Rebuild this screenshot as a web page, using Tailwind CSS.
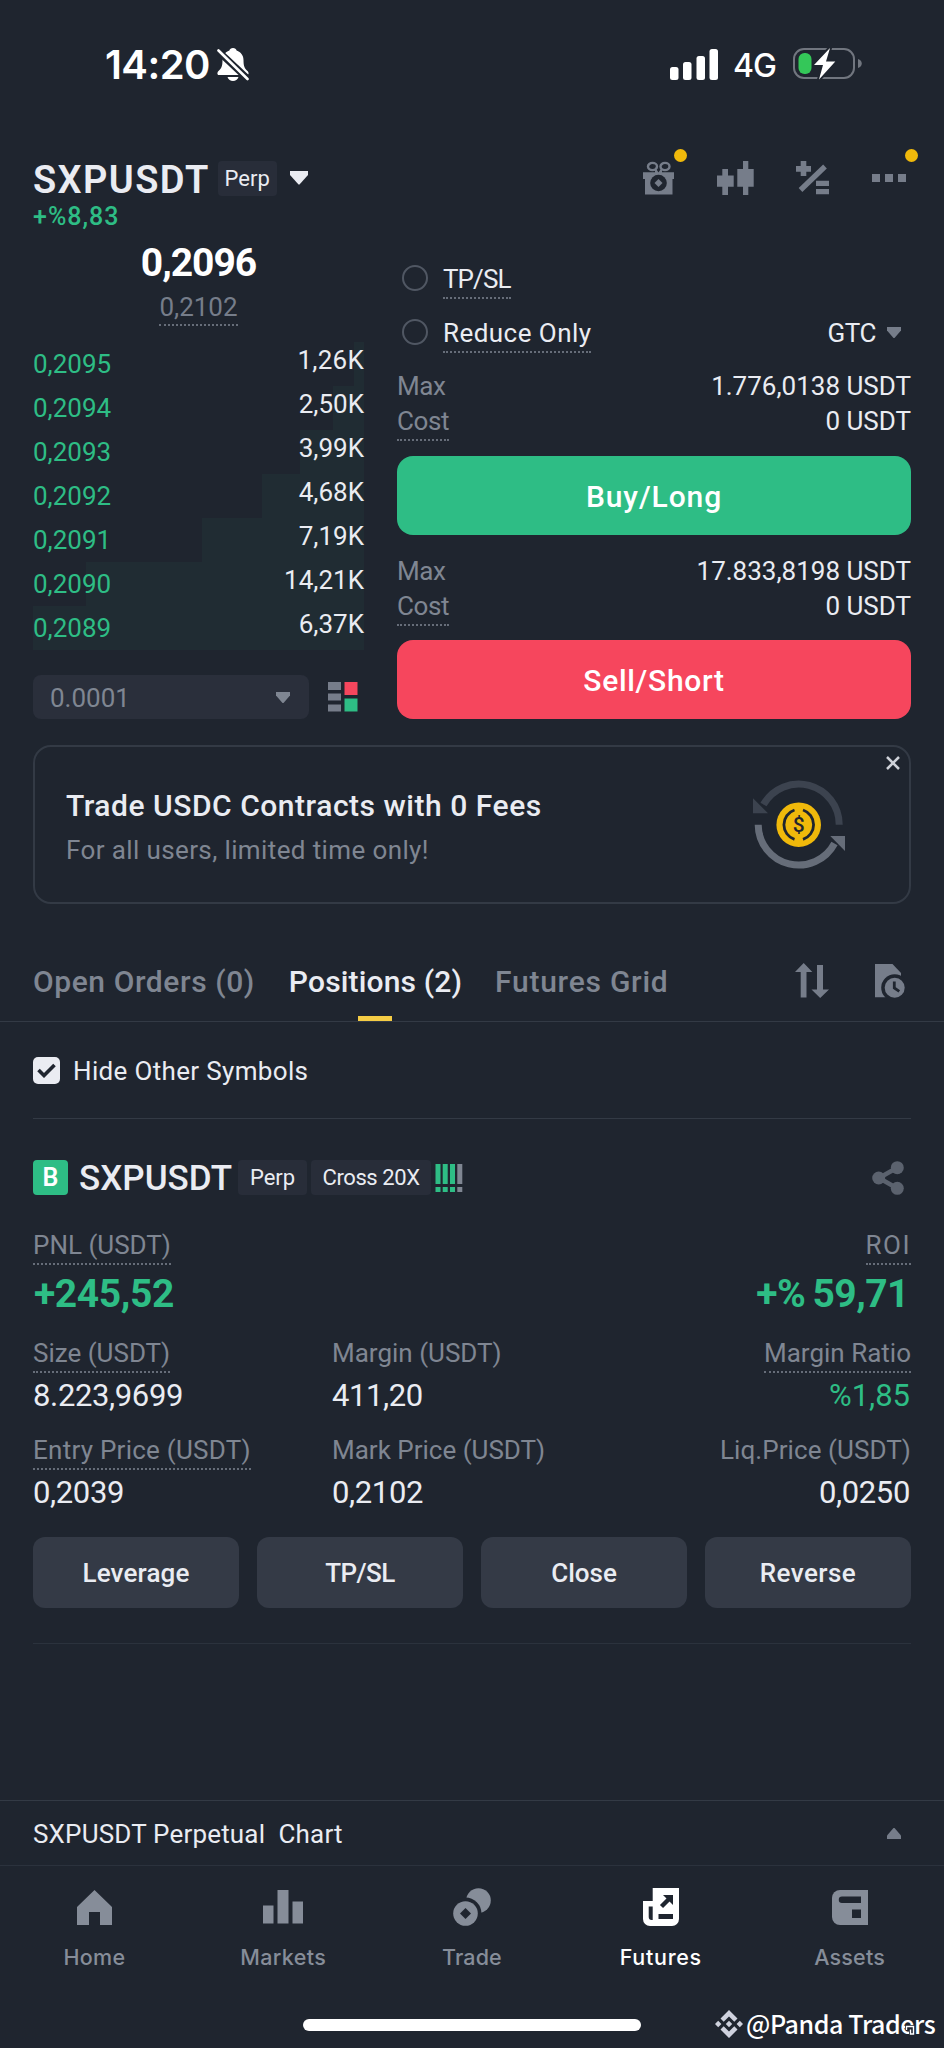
<!DOCTYPE html>
<html lang="en">

<head>
	<meta charset="UTF-8" />
	<meta name="viewport" content="width=device-width, initial-scale=1.0" />
	<title>Futures</title>
	<script src="https://cdn.jsdelivr.net/npm/@tailwindcss/browser@4"></script>
</head>

<body class="bg-[#1f252f]">
<div class="relative w-[944px] h-[2048px] overflow-hidden bg-[#1f252f] text-[#eaecf2] font-[Roboto,sans-serif] text-[26px] whitespace-nowrap">

	<!-- Status bar -->
	<div class="h-[129px] pl-[105px] pr-[83px] flex items-center justify-between text-white font-[Inter,sans-serif]">
		<div class="flex items-center">
			<span class="text-[40px] font-semibold tracking-[-0.56px]">14:20</span>
			<svg class="ml-[7px]" width="32" height="34" viewBox="0 0 32 34" fill="#fff">
				<path d="M16 0c-2 0-3.200 1-3.600 2.500C8 4 5.500 7.500 5.500 12c0 6-1 8.500-4 11-1.500 1.500-1.500 4 .5 4h28c2 0 2-2.500.5-4-3-2.500-4-5-4-11 0-4.500-2.500-8-6.900-9.500C19.200 1 18 0 16 0zM10.500 29h11c-.8 2.600-3 4-5.500 4s-4.700-1.400-5.500-4z" />
				<path d="M1 3l31 29" stroke="#1f252f" stroke-width="7" />
				<path d="M1.500 2.500l29 28.500" stroke="#fff" stroke-width="2.600" stroke-linecap="round" />
			</svg>
		</div>
		<div class="flex items-center">
			<svg width="48" height="31" viewBox="0 0 48 31" fill="#fff">
				<rect x="0" y="18" width="8.500" height="13" rx="2.500" />
				<rect x="13" y="13" width="8.500" height="18" rx="2.500" />
				<rect x="26.500" y="7" width="8.500" height="24" rx="2.500" />
				<rect x="39.500" y="0" width="8.500" height="31" rx="2.500" />
			</svg>
			<span class="ml-[15px] mt-[2px] text-[32px] font-medium tracking-[-1px]">4G</span>
			<svg class="ml-[17px] -mr-px" width="69" height="34" viewBox="0 0 69 34">
				<rect x="1" y="1" width="60" height="29" rx="10" fill="none" stroke="#71767f" stroke-width="2" />
				<path d="M65 11c5 1.500 5 7.500 0 9z" fill="#71767f" />
				<rect x="5.500" y="5" width="13" height="21" rx="6" fill="#34c759" />
				<path d="M37 0L21 17h9l-4 14.500L42.300 13.500H33z" fill="#fff" stroke="#1f252f" stroke-width="4" paint-order="stroke" stroke-linejoin="round" />
			</svg>
		</div>
	</div>

	<!-- Symbol header -->
	<div class="mt-[26px] h-[46px] pl-[33px] pr-[38px] flex items-center justify-between">
		<div class="flex items-center">
			<span class="mt-[4px] text-[38px] font-semibold tracking-[1.4px]">SXPUSDT</span>
			<span class="ml-[8px] h-[35px] w-[59px] flex items-center justify-center rounded-[4px] bg-[#282d39] text-[22px]">Perp</span>
			<svg class="ml-[13px]" width="18" height="14" viewBox="0 0 18 14" fill="#eaecf2"><path d="M0 0h18v4L9.500 13.500h-1L0 4z" /></svg>
		</div>
		<div class="flex items-center text-[#767d8a]">
			<div class="relative">
				<svg width="31" height="34" viewBox="0 0 31 34" fill="currentColor">
					<ellipse cx="9.500" cy="5.500" rx="4.500" ry="3.600" fill="none" stroke="currentColor" stroke-width="2.400" />
					<ellipse cx="22" cy="5.500" rx="4.500" ry="3.600" fill="none" stroke="currentColor" stroke-width="2.400" />
					<path d="M12 6l3.500 5.500L19 6v6h-7zM0 11.300h31V18h-1.500v15.500H2V18H0z" />
					<circle cx="15.500" cy="22" r="8.300" fill="#1f252f" />
					<path d="M15.500 18l4 4-4 4-4-4z" />
				</svg>
				<span class="absolute left-[31px] -top-[12px] w-[13px] h-[13px] rounded-full bg-[#f0b90b]"></span>
			</div>
			<svg class="ml-[43px]" width="37" height="34" viewBox="0 0 37 34" fill="currentColor">
				<path d="M5.300 8H11v6.500h5.700v11.200H11V34H5.300v-8.300H0V14.500h5.300zM26 0h5.300v8h5.400v17.700h-5.400V34H26v-8.300h-5.700V8H26z" />
			</svg>
			<svg class="ml-[42px]" width="33" height="34" viewBox="0 0 33 34" fill="currentColor">
				<path d="M4.700 0h5.600v5H15v5.700h-4.700V15H4.700v-4.300H0V5h4.700zM20 19.700h13V25H20zM20 28h13v5.300H20z" />
				<path d="M4.500 29L29 5.500" stroke="currentColor" stroke-width="5.300" />
			</svg>
			<div class="relative ml-[43px]">
				<svg width="34" height="34" viewBox="0 0 34 34" fill="currentColor"><path d="M0 13h8v8H0zM13 13h8v8h-8zM26 13h8v8h-8z" /></svg>
				<span class="absolute left-[33px] -top-[12px] w-[13px] h-[13px] rounded-full bg-[#f0b90b]"></span>
			</div>
		</div>
	</div>
	<div class="pl-[33px] pt-[1px] h-[29px] leading-[30px] text-[25px] font-medium tracking-[1px] text-[#2ebd85]">+%8,83</div>

	<!-- Order book and order form -->
	<div class="px-[33px] flex justify-between">
		<div class="w-[331px]">
			<div class="h-[64px] leading-[66px] text-[39px] font-bold tracking-[-1px] text-white text-center">0,2096</div>
			<div class="flex justify-center text-[#767d8a]">
				<span class="leading-[27px] pb-[3px] border-b-2 border-dotted border-[#666d79]">0,2102</span>
			</div>
			<div class="mt-[16px] text-[#2ebd85]">
				<div class="h-[44px] flex items-center justify-between bg-linear-to-l from-[#202c33] from-[10px] to-transparent to-[10px]"><span>0,2095</span><span class="pb-[8px] text-[#eaecf2] tracking-[0.26px]">1,26K</span></div>
				<div class="h-[44px] flex items-center justify-between bg-linear-to-l from-[#202c33] from-[31px] to-transparent to-[31px]"><span>0,2094</span><span class="pb-[8px] text-[#eaecf2]">2,50K</span></div>
				<div class="h-[44px] flex items-center justify-between bg-linear-to-l from-[#202c33] from-[64px] to-transparent to-[64px]"><span>0,2093</span><span class="pb-[8px] text-[#eaecf2]">3,99K</span></div>
				<div class="h-[44px] flex items-center justify-between bg-linear-to-l from-[#202c33] from-[102px] to-transparent to-[102px]"><span>0,2092</span><span class="pb-[8px] text-[#eaecf2]">4,68K</span></div>
				<div class="h-[44px] flex items-center justify-between bg-linear-to-l from-[#202c33] from-[162px] to-transparent to-[162px]"><span>0,2091</span><span class="pb-[8px] text-[#eaecf2]">7,19K</span></div>
				<div class="h-[44px] flex items-center justify-between bg-linear-to-l from-[#202c33] from-[278px] to-transparent to-[278px]"><span>0,2090</span><span class="pb-[8px] text-[#eaecf2]">14,21K</span></div>
				<div class="h-[44px] flex items-center justify-between bg-[#202c33]"><span>0,2089</span><span class="pb-[8px] text-[#eaecf2]">6,37K</span></div>
			</div>
			<div class="mt-[25px] flex items-center">
				<div class="w-[276px] h-[44px] pl-[17px] pr-[19px] flex items-center justify-between rounded-[8px] bg-[#2a2f3b] text-[#7f8692]">
					<span class="pt-[2px]">0.0001</span>
					<svg width="14" height="11" viewBox="0 0 14 11" fill="#7f8692"><path d="M0 0h14v3.500L7.500 11h-1L0 3.500z" /></svg>
				</div>
				<svg class="ml-[19px]" width="30" height="30" viewBox="0 0 30 30" fill="#767d8a">
					<path d="M0 0h13v8H0zM0 11.500h13v7H0zM0 22.500h13v7H0z" />
					<path d="M16.500 0h13v13h-13z" fill="#f6465d" />
					<path d="M16.500 16.500h13v13h-13z" fill="#2ebd85" />
				</svg>
			</div>
		</div>

		<div class="w-[514px] pt-[31px]">
			<div class="h-[54px] flex items-start">
				<span class="mt-[4px] ml-[5px] w-[26px] h-[26px] rounded-full border-2 border-[#505763]"></span>
				<span class="ml-[15px] leading-[36px] border-b-2 border-dotted border-[#666d79] tracking-[-0.9px]">TP/SL</span>
			</div>
			<div class="h-[53px] flex items-start">
				<span class="mt-[4px] ml-[5px] w-[26px] h-[26px] rounded-full border-2 border-[#505763]"></span>
				<span class="ml-[15px] leading-[36px] border-b-2 border-dotted border-[#666d79] tracking-[0.45px]">Reduce Only</span>
				<span class="ml-auto leading-[36px] tracking-[-0.4px]">GTC</span>
				<svg class="mt-[12px] ml-[11px] mr-[10px]" width="14" height="11" viewBox="0 0 14 11" fill="#767d8a"><path d="M0 0h14v3.500L7.500 11h-1L0 3.500z" /></svg>
			</div>
			<div class="h-[35px] flex justify-between leading-[36px]"><span class="text-[#7f8692] tracking-[-0.4px]">Max</span><span>1.776,0138 USDT</span></div>
			<div class="h-[37px] flex items-start justify-between leading-[36px]"><span class="text-[#7f8692] border-b-2 border-dotted border-[#666d79] tracking-[-0.4px]">Cost</span><span>0 USDT</span></div>
			<div class="mt-[16px] h-[79px] pt-[1px] rounded-[16px] bg-[#2ebd85] flex items-center justify-center text-[30px] font-medium tracking-[0.9px] text-white">Buy/Long</div>
			<div class="mt-[18px] h-[35px] flex justify-between leading-[36px]"><span class="text-[#7f8692] tracking-[-0.4px]">Max</span><span>17.833,8198 USDT</span></div>
			<div class="h-[37px] flex items-start justify-between leading-[36px]"><span class="text-[#7f8692] border-b-2 border-dotted border-[#666d79] tracking-[-0.4px]">Cost</span><span>0 USDT</span></div>
			<div class="mt-[15px] h-[79px] pt-[1px] rounded-[16px] bg-[#f6465d] flex items-center justify-center text-[30px] font-medium tracking-[0.7px] text-white">Sell/Short</div>
		</div>
	</div>

	<!-- Promo banner -->
	<div class="relative mt-[26px] mx-[33px] h-[159px] pl-[31px] pr-[63px] flex items-center justify-between rounded-[18px] border-2 border-[#333a45]">
		<div class="pt-[7px]">
			<div class="h-[44px] leading-[44px] text-[30px] font-medium tracking-[0.53px]">Trade USDC Contracts with 0 Fees</div>
			<div class="h-[44px] leading-[44px] text-[#7f8692] tracking-[0.38px]">For all users, limited time only!</div>
		</div>
		<svg width="93" height="90" viewBox="0 0 93 90" fill="none">
			<path d="M86.200 44.700A40.500 40.500 0 0 0 10.500 24.500" stroke="#3c434f" stroke-width="7" />
			<path d="M0 18.300l15 15H0z" fill="#3c434f" />
			<path d="M5.200 44.700a40.500 40.500 0 0 0 76.300 18.800" stroke="#666d79" stroke-width="7" />
			<path d="M77.300 56H92v15z" fill="#666d79" />
			<circle cx="45.700" cy="44.700" r="22.300" fill="#f0b90b" />
			<path d="M41.500 30a15.500 15.500 0 0 0 0 29.400M50 30a15.500 15.500 0 0 1 0 29.400" stroke="#1f252f" stroke-width="2.800" />
			<text x="45.700" y="52.300" text-anchor="middle" font-family="Roboto" font-weight="500" font-size="21" fill="#1f252f">$</text>
		</svg>
		<svg class="absolute right-[9px] top-[9px]" width="14" height="14" viewBox="0 0 14 14" stroke="#cfd2d9" stroke-width="2.500"><path d="M1 1l12 12M13 1L1 13" /></svg>
	</div>

	<!-- Tabs -->
	<div class="mt-[54px] h-[64px] pl-[33px] pr-[39px] flex items-start border-b border-[#333a45] text-[30px] leading-[48px] font-medium text-[#7f8692]">
		<span class="tracking-[0.58px]">Open Orders (0)</span>
		<div class="relative h-[63px] ml-[34px] text-[#eaecf2]">
			<span class="tracking-[0.15px]">Positions (2)</span>
			<span class="absolute bottom-0 left-1/2 -translate-x-1/2 w-[34px] h-[5px] bg-[#f5cc45]"></span>
		</div>
		<span class="ml-[33px] tracking-[0.75px]">Futures Grid</span>
		<svg class="ml-auto mt-[5px]" width="34" height="35" viewBox="0 0 34 35" fill="#767d8a">
			<path d="M8.700 0l8.600 9h-5.800v25.500H5.700V9H0zM22 2h6v24.500h6L25.200 35l-8.700-8.500H22z" />
		</svg>
		<svg class="ml-[46px] mt-[6px]" width="30" height="34" viewBox="0 0 30 34" fill="#767d8a">
			<path d="M0 0h17.500L26 9v24.300H0z" />
			<circle cx="19.700" cy="23.700" r="13.500" fill="#1f252f" />
			<circle cx="19.700" cy="23.700" r="10" />
			<path d="M19.300 17.500v6.500l5 3.300" fill="none" stroke="#1f252f" stroke-width="2.800" />
		</svg>
	</div>
	<div class="mx-[33px] h-[97px] flex items-center border-b border-[#333a45]">
		<span class="w-[27px] h-[27px] rounded-[5px] bg-[#eaecf2] flex items-center justify-center">
			<svg width="19" height="15" viewBox="0 0 19 15" fill="none" stroke="#1f252f" stroke-width="3.600"><path d="M1.500 7l5.500 5.500L17.500 2" /></svg>
		</span>
		<span class="ml-[13px] pt-[2px] tracking-[0.34px]">Hide Other Symbols</span>
	</div>

	<!-- Position -->
	<div class="px-[33px]">
		<div class="mt-[36px] h-[45px] pr-[7px] flex items-center text-[22px]">
			<span class="w-[35px] h-[35px] rounded-[4px] bg-[#2ebd85] flex items-center justify-center text-[25px] font-semibold text-white">B</span>
			<span class="ml-[11px] pt-[3px] text-[35px] font-medium">SXPUSDT</span>
			<span class="ml-[6px] w-[69px] h-[35px] rounded-[4px] bg-[#282d39] flex items-center justify-center">Perp</span>
			<span class="ml-[4px] w-[120px] h-[35px] rounded-[4px] bg-[#282d39] flex items-center justify-center tracking-[-0.4px]">Cross 20X</span>
			<svg class="ml-[4px]" width="28" height="28" viewBox="0 0 28 28" fill="#2ebd85">
				<path d="M.5 0h5v20h-5zM.5 23h5v5h-5zM7.700 0h5v20h-5zM7.700 23h5v5h-5zM15 0h5v20h-5zM15 23h5v5h-5z" />
				<path d="M22.300 0h5v20h-5zM22.300 23h5v5h-5z" fill="#7f8692" />
			</svg>
			<svg class="ml-auto" width="32" height="34" viewBox="0 0 32 34" fill="#5b626e">
				<path d="M25 6.700L7 17l18 10.300" fill="none" stroke="#5b626e" stroke-width="4.500" />
				<circle cx="25.300" cy="6.700" r="6.500" /><circle cx="6.700" cy="17" r="6.500" /><circle cx="25.300" cy="27.300" r="6.500" />
			</svg>
		</div>
		<div class="mt-[27px] h-[37px] flex items-start justify-between leading-[36px] text-[#7f8692]">
			<span class="border-b-2 border-dotted border-[#666d79]">PNL (USDT)</span>
			<span class="min-w-[45px] border-b-2 border-dotted border-[#666d79] text-center tracking-[1.5px]">ROI</span>
		</div>
		<div class="h-[58px] flex justify-between leading-[60px] text-[39px] font-bold text-[#2ebd85]">
			<span class="pl-px tracking-[-0.4px]">+245,52</span>
			<span class="pr-[2px] tracking-[-0.5px]">+%&#8202;&#8202;59,71</span>
		</div>
		<div class="mt-[13px] h-[37px] grid grid-cols-[299px_1fr_auto] items-start justify-items-start leading-[36px] text-[#7f8692]">
			<span class="border-b-2 border-dotted border-[#666d79]">Size (USDT)</span>
			<span>Margin (USDT)</span>
			<span class="border-b-2 border-dotted border-[#666d79]">Margin Ratio</span>
		</div>
		<div class="h-[47px] grid grid-cols-[299px_1fr_auto] leading-[48px] text-[31px]">
			<span class="tracking-[-0.36px]">8.223,9699</span>
			<span class="tracking-[-0.4px]">411,20</span>
			<span class="pr-px text-[#2ebd85]">%1,85</span>
		</div>
		<div class="mt-[14px] h-[37px] grid grid-cols-[299px_1fr_auto] items-start justify-items-start leading-[35px] text-[#7f8692]">
			<span class="border-b-2 border-dotted border-[#666d79] tracking-[0.25px]">Entry Price (USDT)</span>
			<span>Mark Price (USDT)</span>
			<span class="tracking-[0.08px]">Liq.Price (USDT)</span>
		</div>
		<div class="h-[45px] grid grid-cols-[299px_1fr_auto] leading-[46px] text-[31px] tracking-[-0.36px]">
			<span>0,2039</span>
			<span>0,2102</span>
			<span class="pr-px">0,0250</span>
		</div>
		<div class="mt-[22px] grid grid-cols-4 gap-[18px] font-medium">
			<button class="h-[71px] pt-[1px] rounded-[12px] bg-[#343a46] tracking-[0.15px]">Leverage</button>
			<button class="h-[71px] pt-[1px] rounded-[12px] bg-[#343a46] tracking-[-0.6px]">TP/SL</button>
			<button class="h-[71px] pt-[1px] rounded-[12px] bg-[#343a46]">Close</button>
			<button class="h-[71px] pt-[1px] rounded-[12px] bg-[#343a46] tracking-[0.44px]">Reverse</button>
		</div>
		<div class="mt-[35px] h-px bg-[#2b323d]"></div>
	</div>

	<!-- Chart drawer -->
	<div class="mt-[156px] h-[65px] pl-[33px] pr-[43px] flex items-center justify-between border-t border-[#333a45]">
		<span class="pt-[2px] whitespace-pre tracking-[0.18px]">SXPUSDT Perpetual  Chart</span>
		<svg width="14" height="11" viewBox="0 0 14 11" fill="#767d8a"><path d="M0 11h14V7.500L7.500 0h-1L0 7.500z" /></svg>
	</div>

	<!-- Bottom navigation -->
	<div class="pt-[21px] grid grid-cols-5 border-t border-[#2b323d] font-[Inter,sans-serif] text-[21.500px] leading-[30px] font-medium text-[#868d99]">
		<div class="flex flex-col items-center gap-[15px]">
			<div class="h-[40px] flex items-center"><svg width="35" height="35" viewBox="0 0 35 35" fill="currentColor"><path d="M17.500 0L35 17v18H23V22H12v13H0V17z" /></svg></div>
			<span class="tracking-[0.3px]">Home</span>
		</div>
		<div class="flex flex-col items-center gap-[15px]">
			<div class="h-[40px] flex items-center"><svg width="41" height="34" viewBox="0 0 41 34" fill="currentColor"><path d="M0 15.500h10.500v18H0zM14.500 0h11v33.500h-11zM29.500 11.500H40v22H29.500z" /></svg></div>
			<span class="tracking-[0.37px]">Markets</span>
		</div>
		<div class="flex flex-col items-center gap-[15px]">
			<div class="h-[40px] flex items-center"><svg width="38" height="38" viewBox="0 0 38 38" fill="currentColor">
				<circle cx="25.500" cy="12.500" r="12.300" />
				<circle cx="12.500" cy="25.500" r="16" fill="#1f252f" />
				<circle cx="12.500" cy="25.500" r="12.300" />
				<path d="M12.500 20l5.500 5.500-5.500 5.500L7 25.500z" fill="#1f252f" />
			</svg></div>
			<span class="tracking-[0.12px]">Trade</span>
		</div>
		<div class="flex flex-col items-center gap-[15px] text-white">
			<div class="h-[40px] flex items-center"><svg width="36" height="38" viewBox="0 0 36 38" fill="currentColor">
				<path d="M9.700 0H36v31a7 7 0 0 1-7 7H7a7 7 0 0 1-7-7V13h9.700z" />
				<g fill="#1f252f">
					<path d="M5.700 18.500h4V32h-1a3 3 0 0 1-3-3zM15.500 26H30v5H15.500z" />
					<path d="M20 7h10v10z" />
				</g>
				<path d="M18.500 18.500l8-8" stroke="#1f252f" stroke-width="4.500" />
			</svg></div>
			<span class="tracking-[0.7px]">Futures</span>
		</div>
		<div class="flex flex-col items-center gap-[15px]">
			<div class="h-[40px] flex items-center"><svg width="36" height="35" viewBox="0 0 36 35" fill="currentColor">
				<path d="M8 0h28v35H8a8 8 0 0 1-8-8V8a8 8 0 0 1 8-8z" />
				<path d="M10 6.500h19V13H10a3.200 3.200 0 0 1 0-6.500zM20 19.500h9V28h-9z" fill="#1f252f" />
			</svg></div>
			<span class="tracking-[0.18px]">Assets</span>
		</div>
	</div>
	<div class="mt-[47px] mx-auto w-[338px] h-[12px] rounded-full bg-white"></div>

	<!-- Watermark -->
	<div class="absolute left-[715px] top-[2004px] h-[40px] flex items-center text-white font-['Noto_Sans_CJK_SC',sans-serif] text-[25px] font-medium">
		<svg width="28" height="28" viewBox="0 0 28 28" fill="#cfd2de">
			<path d="M14 0l8.500 8.500-3.200 3.200L14 6.400l-5.300 5.300-3.200-3.200zM14 28l8.500-8.500-3.200-3.200-5.300 5.300-5.300-5.300-3.200 3.200zM3.200 10.800L6.400 14l-3.200 3.200L0 14zM24.800 10.800L28 14l-3.200 3.200-3.200-3.200zM14 10.800l3.200 3.200-3.200 3.200-3.200-3.200z" />
		</svg>
		<span class="ml-[3px] tracking-[-0.4px]">@Panda Traders</span>
		<svg class="absolute left-[190px] top-[21px]" width="10" height="10" viewBox="0 0 10 10" fill="none">
			<path d="M1.500 5V1.500H8.500V9H5.500V4.500" stroke="#1f252f" stroke-width="3" />
			<path d="M1.500 5V1.500H8.500V9H5.500V4.500" stroke="#fff" stroke-width="1.400" />
		</svg>
	</div>
</div>
</body>

</html>
